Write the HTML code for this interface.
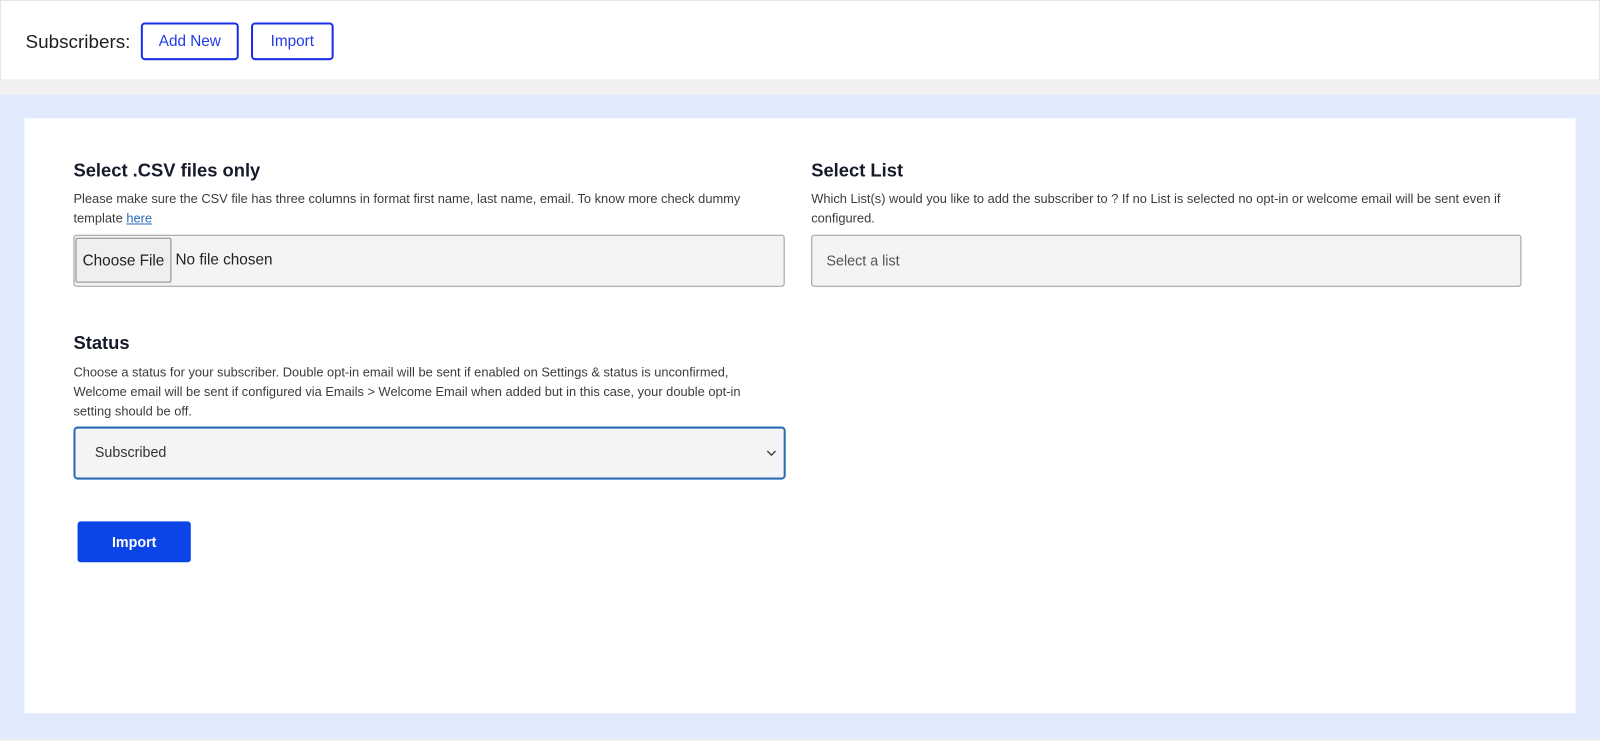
<!DOCTYPE html>
<html><head><meta charset="utf-8"><style>
*{box-sizing:border-box;margin:0;padding:0}
html,body{width:1600px;height:741px;background:#f0f0f0;font-family:"Liberation Sans",sans-serif;overflow:hidden;position:relative}
#w{position:absolute;left:0;top:0;width:1568px;height:726px;transform:scale(1.0204);transform-origin:0 0}
.top{position:absolute;left:0;top:0;width:1568px;height:79px;background:#fff;border:1px solid #e6e6e6}
.top .lbl{position:absolute;left:24px;top:29px;font-size:18.5px;color:#1e1e1e}
.ob{position:absolute;top:21px;height:37px;border:2px solid #1a2ee8;border-radius:4px;color:#1f3be6;font-size:15px;display:flex;align-items:center;justify-content:center;background:#fff}
.blue{position:absolute;left:0;top:93px;width:1568px;height:631px;background:#e1e9fc}
.panel{position:absolute;left:24px;top:23px;width:1520px;height:583px;background:#fff}
h3{position:absolute;font-size:18px;font-weight:bold;color:#161a2a;white-space:nowrap}
p{position:absolute;font-size:12.6px;line-height:19px;color:#3c3c3c;white-space:nowrap}
a{color:#2a6bb8;text-decoration:underline}
.box{position:absolute;background:#f4f4f4;border:1px solid #9a9a9a;border-radius:3px}
</style></head><body><div id="w">
<div class="top">
<div class="lbl">Subscribers:</div>
<div class="ob" style="left:137px;width:96px">Add New</div>
<div class="ob" style="left:245px;width:81px">Import</div>
</div>
<div class="blue"><div class="panel">
<h3 style="left:48px;top:41px">Select .CSV files only</h3>
<p style="left:48px;top:70px">Please make sure the CSV file has three columns in format first name, last name, email. To know more check dummy<br>template <a>here</a></p>
<div class="box" style="left:48px;top:114px;width:697px;height:51px">
<div style="position:absolute;left:1px;top:2px;width:94px;height:44px;border:1px solid #888;background:#efefef;border-radius:2px;font-size:15px;color:#222;display:flex;align-items:center;justify-content:center">Choose File</div>
<div style="position:absolute;left:99px;top:15px;font-size:15px;color:#222">No file chosen</div>
</div>
<h3 style="left:771px;top:41px">Select List</h3>
<p style="left:771px;top:70px">Which List(s) would you like to add the subscriber to ? If no List is selected no opt-in or welcome email will be sent even if<br>configured.</p>
<div class="box" style="left:771px;top:114px;width:696px;height:51px"><div style="position:absolute;left:14px;top:16px;font-size:14px;color:#555">Select a list</div></div>
<h3 style="left:48px;top:210px">Status</h3>
<p style="left:48px;top:240px">Choose a status for your subscriber. Double opt-in email will be sent if enabled on Settings &amp; status is unconfirmed,<br>Welcome email will be sent if configured via Emails &gt; Welcome Email when added but in this case, your double opt-in<br>setting should be off.</p>
<div class="box" style="left:48px;top:302px;width:698px;height:52px;border:2px solid #2a6bb8;border-radius:4px">
<div style="position:absolute;left:19px;top:15px;font-size:14px;color:#333">Subscribed</div>
<svg style="position:absolute;right:6px;top:19px" width="12" height="10" viewBox="0 0 12 10"><path d="M2 3l4 4 4-4" fill="none" stroke="#444" stroke-width="1.4"/></svg>
</div>
<div style="position:absolute;left:52px;top:395px;width:111px;height:40px;background:#0b45e8;border-radius:3px;color:#fff;font-weight:bold;font-size:14px;display:flex;align-items:center;justify-content:center">Import</div>
</div></div>
</div></body></html>
